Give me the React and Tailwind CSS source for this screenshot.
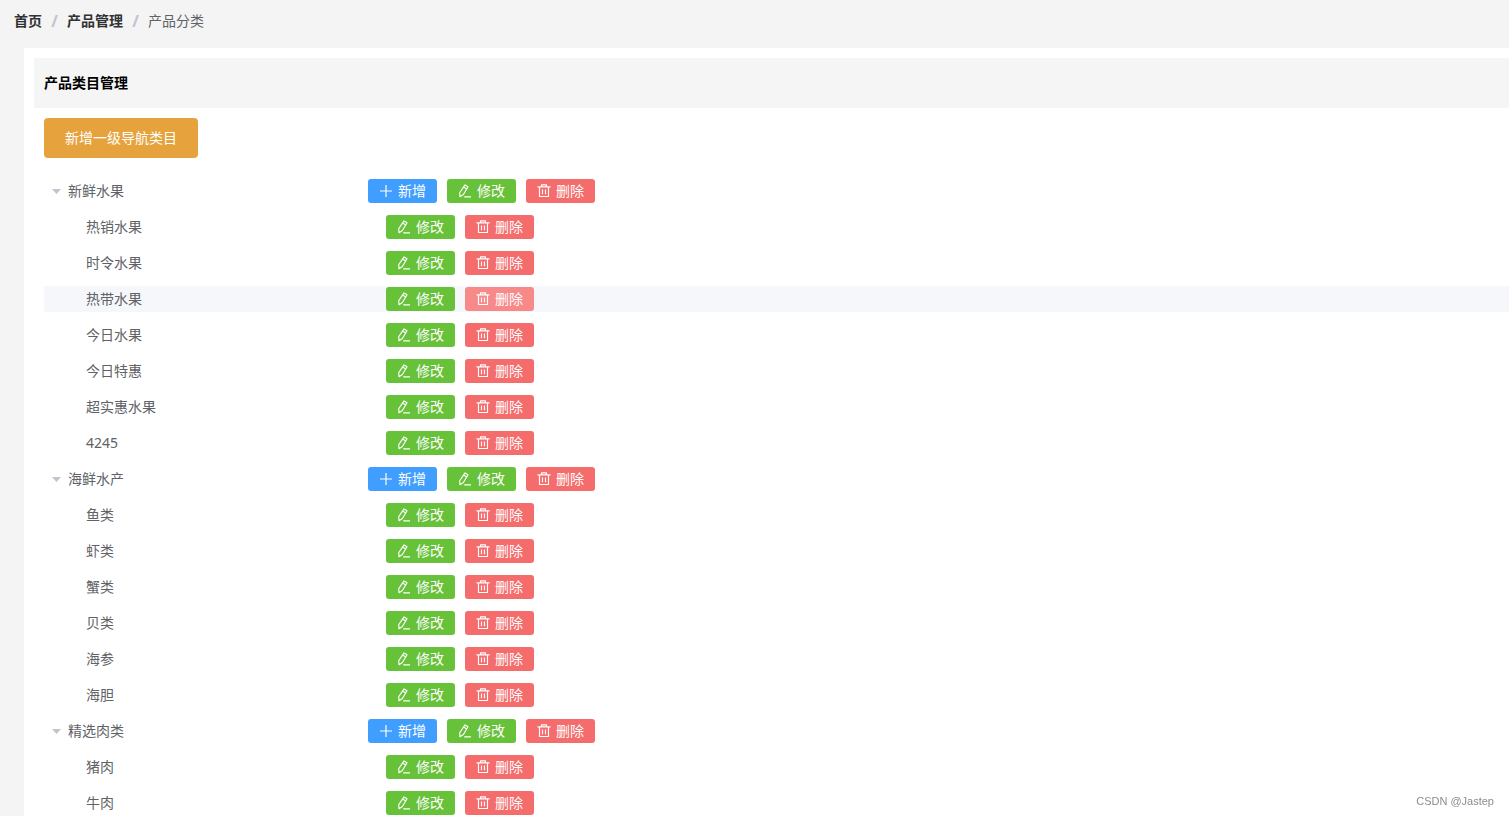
import React, { useState } from 'react';
import clsx from 'clsx';

const CATEGORIES = [
  {
    name: '新鲜水果',
    children: ['热销水果', '时令水果', '热带水果', '今日水果', '今日特惠', '超实惠水果', '4245'],
  },
  {
    name: '海鲜水产',
    children: ['鱼类', '虾类', '蟹类', '贝类', '海参', '海胆'],
  },
  {
    name: '精选肉类',
    children: ['猪肉', '牛肉'],
  },
];

const ICONS = {
  plus: 'M1 7h12M7 1v12',
  edit: 'M7 .9l3 1.8-4.6 7.8-3.4 2.2-.3-4zM5.7 3.1l3 1.8M6.2 12.9h6.8',
  trash: 'M.5 2.8h13M4.5 2.8V.9h5v1.9M2.5 2.8v9.7h9V2.8M5.5 5.4v4.8M8.5 5.4v4.8',
};

const BUTTON_COLORS = {
  primary: 'bg-[#409eff] hover:bg-[#66b1ff]',
  success: 'bg-[#67c23a] hover:bg-[#85ce61]',
  danger: 'bg-[#f56c6c] hover:bg-[#f78989]',
  dangerActive: 'bg-[#f78989]',
};

function Icon({ name }) {
  return (
    <svg viewBox="0 0 14 14" fill="none" stroke="currentColor" strokeWidth="1.15" strokeLinejoin="round" aria-hidden="true" className="size-3.5 shrink-0">
      <path d={ICONS[name]} />
    </svg>
  );
}

function Caret({ open }) {
  return (
    <svg viewBox="0 0 14 14" fill="currentColor" aria-hidden="true" className={clsx('size-3.5', !open && '-rotate-90')}>
      <path d="M3 5h9L7.5 10z" />
    </svg>
  );
}

function ActionButton({ icon, color, children }) {
  return (
    <button
      type="button"
      className={clsx('flex h-6 items-center gap-[5px] rounded-[3px] px-[11px] text-white', BUTTON_COLORS[color])}
    >
      <Icon name={icon} />
      <span>{children}</span>
    </button>
  );
}

function TreeRow({ name, parent, open, onToggle, active }) {
  return (
    <div className={clsx('my-[10px] flex h-[26px] items-center hover:bg-[#f5f7fa]', active && 'bg-[#f5f7fa]', !parent && 'pl-[18px]')}>
      {parent ? (
        <button
          type="button"
          aria-label={name}
          aria-expanded={open}
          onClick={onToggle}
          className="flex w-6 shrink-0 justify-center text-[#c0c4cc]"
        >
          <Caret open={open} />
        </button>
      ) : (
        <span className="w-6 shrink-0" />
      )}
      <span className="w-[300px] shrink-0">{name}</span>
      <div className="flex gap-[10px]">
        {parent && <ActionButton icon="plus" color="primary">新增</ActionButton>}
        <ActionButton icon="edit" color="success">修改</ActionButton>
        <ActionButton icon="trash" color={active ? 'dangerActive' : 'danger'}>删除</ActionButton>
      </div>
    </div>
  );
}

function Separator() {
  return <span className="mx-[9px] w-[7px] text-center text-base leading-5 font-bold text-[#c0c4cc]">/</span>;
}

function Breadcrumb() {
  return (
    <nav className="flex h-12 shrink-0 items-start px-3.5 pt-[11px]">
      <a href="#home" className="font-bold text-[#303133]">首页</a>
      <Separator />
      <a href="#product" className="font-bold text-[#303133]">产品管理</a>
      <Separator />
      <span>产品分类</span>
    </nav>
  );
}

export default function App() {
  const [closed, setClosed] = useState([]);

  const toggle = (name) => {
    setClosed((prev) => (prev.includes(name) ? prev.filter((n) => n !== name) : [...prev, name]));
  };

  return (
    <div className="flex h-screen flex-col overflow-hidden bg-[#f4f4f4] font-['Noto_Sans','Noto_Sans_CJK_SC',sans-serif] text-sm text-[#606266]">
      <Breadcrumb />

      <main className="ml-6 grow bg-white pt-[10px] pl-[10px]">
        <h1 className="flex h-[50px] items-center bg-[#f5f5f5] px-[10px] font-bold text-black">产品类目管理</h1>

        <div className="pt-[10px] pl-[10px]">
          <button type="button" className="h-10 rounded-[4px] bg-[#e6a23c] px-[21px] text-white hover:bg-[#ebb563]">
            新增一级导航类目
          </button>

          {/* Category tree */}
          <div className="pt-[10px]">
            {CATEGORIES.map((category) => {
              const open = !closed.includes(category.name);
              return (
                <div key={category.name}>
                  <TreeRow name={category.name} parent open={open} onToggle={() => toggle(category.name)} />
                  {open && category.children.map((child) => (
                    <TreeRow key={child} name={child} active={child === '热带水果'} />
                  ))}
                </div>
              );
            })}
          </div>
        </div>
      </main>

      <span className="pointer-events-none fixed right-[15px] bottom-2 font-['Liberation_Sans',sans-serif] text-[11px] leading-[14px] text-[#8c8c8c]">
        CSDN @Jastep
      </span>
    </div>
  );
}
